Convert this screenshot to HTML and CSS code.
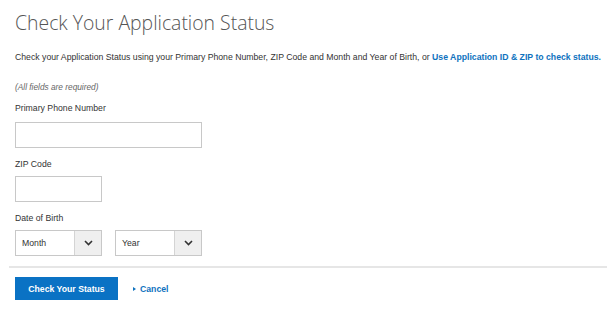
FILE: index.html
```html
<!DOCTYPE html>
<html>
<head>
<meta charset="utf-8">
<link rel="stylesheet" href="styles.css">
</head>
<body>
<div class="page">
  <h1 class="title">Check Your Application Status</h1>
  <p class="intro">Check your Application Status using your Primary Phone Number, ZIP Code and Month and Year of Birth, or <a class="link" href="#">Use Application ID &amp; ZIP to check status.</a></p>
  <p class="required">(All fields are required)</p>
  <div class="field field-first">
    <label class="label">Primary Phone Number</label>
    <div class="input input-phone"></div>
  </div>
  <div class="field">
    <label class="label">ZIP Code</label>
    <div class="input input-zip"></div>
  </div>
  <div class="field">
    <label class="label">Date of Birth</label>
    <div class="selects">
      <div class="select">
        <span class="select-text">Month</span>
        <span class="select-arrow"><svg width="9" height="6" viewBox="0 0 9 6"><path d="M1 1 L4.5 4.5 L8 1" fill="none" stroke="#333" stroke-width="1.6"/></svg></span>
      </div>
      <div class="select">
        <span class="select-text">Year</span>
        <span class="select-arrow"><svg width="9" height="6" viewBox="0 0 9 6"><path d="M1 1 L4.5 4.5 L8 1" fill="none" stroke="#333" stroke-width="1.6"/></svg></span>
      </div>
    </div>
  </div>
  <div class="divider"></div>
  <div class="actions">
    <button class="btn">Check Your Status</button>
    <a class="cancel" href="#"><span class="tri"></span>Cancel</a>
  </div>
</div>
</body>
</html>
```
FILE: styles.css
```css
html, body { margin: 0; padding: 0; background: #fff; }
body { font-family: "Liberation Sans", Arial, sans-serif; color: #333; }
.page { padding: 0 3px 0 9px; }
.title {
  margin: 0;
  padding: 10px 0 0 6px;
  font-family: "Open Sans", sans-serif;
  font-weight: 300;
  font-size: 19.4px;
  line-height: 26px;
  color: #555;
}
.intro {
  margin: 15px 0 0 6px;
  font-size: 8.7px;
  line-height: 12px;
  color: #333;
  white-space: nowrap;
}
.link { color: #0e72be; font-weight: bold; text-decoration: none; }
.required {
  margin: 18px 0 0 6px;
  font-size: 8.3px;
  font-style: italic;
  color: #666;
  line-height: 12px;
}
.field { margin-left: 6px; }
.label { display: block; font-size: 8.7px; line-height: 12px; color: #333; margin-top: 10px; }
.field-first .label { margin-top: 9px; }
.input {
  box-sizing: border-box;
  height: 26px;
  border: 1px solid #c8c8c8;
  margin-top: 6px;
  background: #fff;
}
.field-first .input { margin-top: 8px; }
.input-phone { width: 187px; }
.input-zip { width: 87px; }
.selects { display: flex; gap: 13px; margin-top: 6px; }
.select {
  box-sizing: border-box;
  width: 87px;
  height: 26px;
  border: 1px solid #c8c8c8;
  display: flex;
  align-items: stretch;
}
.select-text { flex: 1; font-size: 8.7px; line-height: 24px; padding-left: 6px; color: #333; }
.select-arrow {
  width: 26px;
  border-left: 1px solid #d4d4d4;
  background: #efefef;
  display: flex;
  align-items: center;
  justify-content: center;
}
.divider { height: 2px; background: #e6e6e6; margin-top: 10px; }
.actions { display: flex; align-items: center; margin: 9px 0 0 6px; }
.btn {
  width: 103px;
  height: 23px;
  border: none;
  background: #0a72c4;
  color: #fff;
  font-family: "Liberation Sans", Arial, sans-serif;
  font-weight: bold;
  font-size: 8.7px;
  padding: 0;
}
.cancel {
  margin-left: 15px;
  color: #0e72be;
  font-weight: bold;
  font-size: 8.7px;
  text-decoration: none;
  display: flex;
  align-items: center;
}
.tri {
  width: 0; height: 0;
  border-left: 3px solid #0e72be;
  border-top: 2.5px solid transparent;
  border-bottom: 2.5px solid transparent;
  margin-right: 4px;
}
```
